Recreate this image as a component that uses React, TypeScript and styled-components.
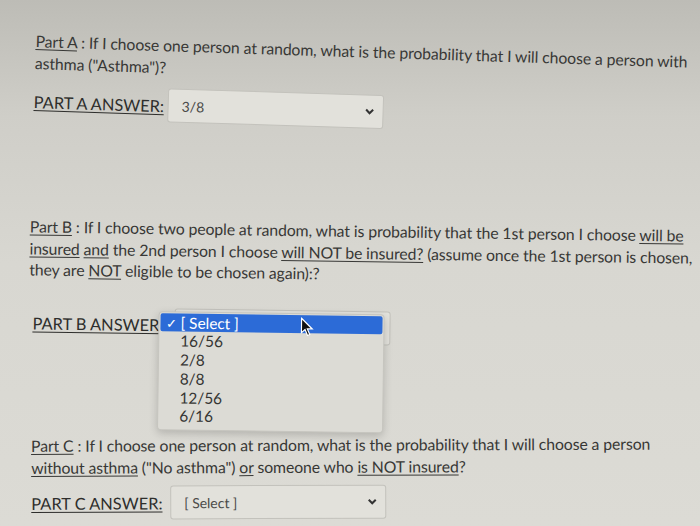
import React from "react"
import styled, { createGlobalStyle } from "styled-components"

const GlobalStyle = createGlobalStyle`
  html, body {
    margin: 0;
    padding: 0;
  }
  body {
    width: 700px;
    height: 526px;
    overflow: hidden;
    font-family: Lato, "Open Sans", "Liberation Sans", sans-serif;
    color: #383836;
    background: linear-gradient(180deg, #bdbcb6 0%, #cfcec8 22%, #d8d7d1 50%, #dcdbd5 100%);
  }
`

const Page = styled.div`
  position: relative;
  width: 700px;
  height: 526px;
  padding-top: 29px;
  box-sizing: border-box;
`

const Section = styled.section<{ $tilt: number; $left: number; $gap: number }>`
  padding-left: ${(p) => p.$left}px;
  margin-bottom: ${(p) => p.$gap}px;
  transform: rotate(${(p) => p.$tilt}deg);
  transform-origin: left top;
`

const Question = styled.p<{ $lh: number; $w: number }>`
  margin: 0;
  width: ${(p) => p.$w}px;
  font-size: 15.8px;
  line-height: ${(p) => p.$lh}px;
  letter-spacing: -0.1px;
`

const U = styled.span`
  text-decoration: underline;
  text-underline-offset: 2px;
  text-decoration-thickness: 1px;
`

const AnswerRow = styled.div<{ $top: number }>`
  position: relative;
  display: flex;
  align-items: center;
  margin-top: ${(p) => p.$top}px;
`

const Label = styled.span<{ $w: number }>`
  width: ${(p) => p.$w}px;
  font-size: 16.4px;
  color: #2e2e2c;
  text-decoration: underline;
  text-underline-offset: 2px;
  white-space: nowrap;
`

const SelectBox = styled.div`
  width: 216px;
  height: 34px;
  box-sizing: border-box;
  display: flex;
  align-items: center;
  justify-content: space-between;
  padding: 0 8px 0 13px;
  border: 1px solid #c3c2bc;
  border-radius: 3px;
  background: #e2e1db;
  font-size: 14px;
  color: #4a4a48;
`

const Chevron = () => (
  <svg width="10" height="8" viewBox="0 0 10 8">
    <path d="M1.5 2 L5 5.6 L8.5 2" fill="none" stroke="#333" strokeWidth="2" />
  </svg>
)

const Menu = styled.ul`
  position: absolute;
  left: 130px;
  top: 3px;
  width: 222px;
  margin: 0;
  padding: 1px 1px 4px;
  list-style: none;
  background: #dcdbd5;
  border: 1px solid #c6c5bf;
  border-radius: 4px;
  box-shadow: 0 3px 8px rgba(0, 0, 0, 0.18);
  z-index: 2;
`

const Option = styled.li<{ $active?: boolean }>`
  height: 18.8px;
  line-height: 18.8px;
  padding-left: ${(p) => (p.$active ? 6 : 20)}px;
  font-size: 15.4px;
  color: ${(p) => (p.$active ? "#ffffff" : "#353533")};
  background: ${(p) => (p.$active ? "#2c6bd7" : "transparent")};
  border-radius: 2px;
`

const Check = styled.span`
  display: inline-block;
  width: 14px;
  font-size: 13px;
`

const Cursor = styled.svg`
  position: absolute;
  left: 272px;
  top: 7px;
  z-index: 3;
`

const options = ["16/56", "2/8", "8/8", "12/56", "6/16"]

export default function App() {
  return (
    <Page>
      <GlobalStyle />
      <Section $tilt={1.8} $left={36} $gap={98}>
        <Question $lh={22} $w={660}>
          <U>Part A</U> : If I choose one person at random, what is the probability that I will choose a person with asthma ("Asthma")?
        </Question>
        <AnswerRow $top={10}>
          <Label $w={134}>PART A ANSWER:</Label>
          <SelectBox>
            3/8
            <Chevron />
          </SelectBox>
        </AnswerRow>
      </Section>

      <Section $tilt={0.8} $left={30} $gap={95}>
        <Question $lh={21.5} $w={668}>
          <U>Part B</U> : If I choose two people at random, what is probability that the 1st person I choose <U>will be insured</U> <U>and</U> the 2nd person I choose <U>will NOT be insured?</U> (assume once the 1st person is chosen, they are <U>NOT</U> eligible to be chosen again):?
        </Question>
        <AnswerRow $top={26}>
          <Label $w={142} style={{ marginLeft: 4 }}>PART B ANSWER:</Label>
          <SelectBox>
            [ Select ]
            <Chevron />
          </SelectBox>
          <Menu>
            <Option $active>
              <Check>✓</Check>[ Select ]
            </Option>
            {options.map((o) => (
              <Option key={o}>{o}</Option>
            ))}
          </Menu>
          <Cursor width="14" height="20" viewBox="0 0 14 20">
            <path d="M1 1 L1 15.5 L4.6 12.3 L7.2 18.2 L9.4 17.2 L6.9 11.6 L11.8 11.6 Z" fill="#111" stroke="#fff" strokeWidth="1.2" />
          </Cursor>
        </AnswerRow>
      </Section>

      <Section $tilt={-0.2} $left={31} $gap={0}>
        <Question $lh={22} $w={660}>
          <U>Part C</U> : If I choose one person at random, what is the probability that I will choose a person <U>without asthma</U> ("No asthma") <U>or</U> someone who <U>is NOT insured</U>?
        </Question>
        <AnswerRow $top={7}>
          <Label $w={139}>PART C ANSWER:</Label>
          <SelectBox>
            [ Select ]
            <Chevron />
          </SelectBox>
        </AnswerRow>
      </Section>
    </Page>
  )
}
